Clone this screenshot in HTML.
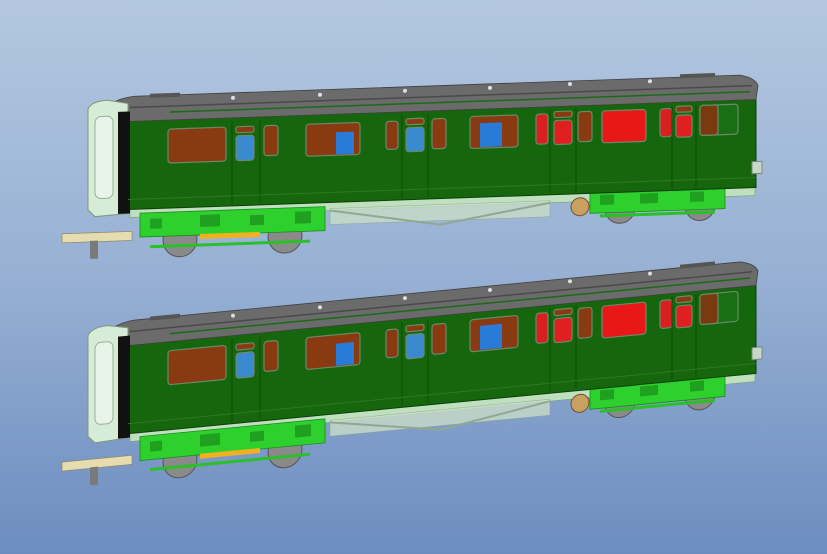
<!DOCTYPE html>
<html><head><meta charset="utf-8"><style>
html,body{margin:0;padding:0;width:827px;height:554px;overflow:hidden}
body{background:linear-gradient(#b3c7e0 0%,#97b0d3 50%,#6c8dc0 100%)}
svg{display:block}
</style></head><body>
<svg width="827" height="554" viewBox="0 0 827 554" xmlns="http://www.w3.org/2000/svg">
<defs>
<g id="car">
  <rect x="62" y="232" width="70" height="9" fill="#e6dcb0" stroke="#8a8060" stroke-width="0.6"/>
  <rect x="90" y="240" width="8" height="18" fill="#7a7a7a"/>
  <rect x="130" y="208" width="625" height="10" fill="#bfe0bf" stroke="#7a9a7a" stroke-width="0.6"/>
  <rect x="330" y="216" width="220" height="16" fill="#c8dcc8" opacity="0.8" stroke="#8aa08a" stroke-width="0.5"/>
  <path d="M330 218 L440 236 L550 218" stroke="#90a890" stroke-width="2" fill="none"/>
  <circle cx="180" cy="242" r="17" fill="#8a8a8a" stroke="#555" stroke-width="1"/>
  <circle cx="285" cy="242" r="17" fill="#8a8a8a" stroke="#555" stroke-width="1"/>
  <rect x="140" y="214" width="185" height="24" fill="#2ed02e" stroke="#1a8a1a" stroke-width="0.8"/>
  <g fill="#1fa01f"><rect x="150" y="220" width="12" height="10"/><rect x="200" y="218" width="20" height="12"/><rect x="250" y="220" width="14" height="10"/><rect x="295" y="218" width="16" height="12"/></g>
  <rect x="200" y="237" width="60" height="5" fill="#f0b020"/>
  <line x1="150" y1="248" x2="310" y2="248" stroke="#2ac02a" stroke-width="3"/>
  <circle cx="620" cy="226" r="15" fill="#8a8a8a" stroke="#555" stroke-width="1"/>
  <circle cx="700" cy="226" r="15" fill="#8a8a8a" stroke="#555" stroke-width="1"/>
  <rect x="590" y="208" width="135" height="22" fill="#2ed02e" stroke="#1a8a1a" stroke-width="0.8"/>
  <g fill="#1fa01f"><rect x="600" y="212" width="14" height="10"/><rect x="640" y="212" width="18" height="10"/><rect x="690" y="212" width="14" height="10"/></g>
  <circle cx="580" cy="223" r="9" fill="#c8a060" stroke="#705030"/>
  <line x1="600" y1="233" x2="715" y2="233" stroke="#2ac02a" stroke-width="3"/>
  <rect x="128" y="120" width="628" height="90" fill="#16660e" stroke="#0c3f08" stroke-width="1"/>
  <path d="M108 106 Q118 98 135 97 L740 97 Q755 100 758 108 L756 122 L128 122 Z" fill="#6b6b6b" stroke="#3f3f3f" stroke-width="0.8"/>
  <line x1="130" y1="108" x2="752" y2="108" stroke="#4a4a4a" stroke-width="1.5"/>
  <line x1="170" y1="114" x2="750" y2="114" stroke="#1c6a14" stroke-width="1.5"/>
  <rect x="150" y="95" width="30" height="4" fill="#555"/>
  <rect x="680" y="94" width="35" height="4" fill="#555"/>
  <path d="M88 108 Q92 100 108 100 L128 104 L128 214 L95 216 L88 209 Z" fill="#d6ecd6" stroke="#7c987c" stroke-width="1"/>
  <rect x="95" y="116" width="18" height="82" rx="6" fill="#e8f4e8" stroke="#9ab09a"/>
  <rect x="118" y="112" width="12" height="102" fill="#111"/>
  <g stroke="#6a8a6a" stroke-width="1.2">
    <rect x="168" y="131" width="58" height="34" rx="3" fill="#8a3a10"/>
    <rect x="236" y="140" width="18" height="25" rx="3" fill="#3a8ad0"/>
    <rect x="236" y="131" width="18" height="6" rx="2" fill="#8a3a10"/>
    <rect x="264" y="131" width="14" height="30" rx="3" fill="#8a3a10"/>
    <rect x="306" y="131" width="54" height="32" rx="3" fill="#8a3a10"/>
    <rect x="336" y="140" width="18" height="22" fill="#2a7ad8" stroke="none"/>
    <rect x="386" y="131" width="12" height="28" rx="3" fill="#8a3a10"/>
    <rect x="406" y="138" width="18" height="24" rx="3" fill="#3a8ad0"/>
    <rect x="406" y="129" width="18" height="6" rx="2" fill="#8a3a10"/>
    <rect x="432" y="130" width="14" height="30" rx="3" fill="#8a3a10"/>
    <rect x="470" y="129" width="48" height="32" rx="3" fill="#8a3a10"/>
    <rect x="480" y="136" width="22" height="24" fill="#2a7ad8" stroke="none"/>
    <rect x="536" y="129" width="12" height="30" rx="3" fill="#d82020"/>
    <rect x="554" y="136" width="18" height="24" rx="3" fill="#e02020"/>
    <rect x="554" y="127" width="18" height="6" rx="2" fill="#8a3a10"/>
    <rect x="578" y="128" width="14" height="30" rx="3" fill="#8a3a10"/>
    <rect x="602" y="128" width="44" height="32" rx="3" fill="#e81818"/>
    <rect x="660" y="128" width="12" height="28" rx="3" fill="#d82020"/>
    <rect x="676" y="135" width="16" height="22" rx="3" fill="#e02020"/>
    <rect x="676" y="126" width="16" height="6" rx="2" fill="#8a3a10"/>
    <rect x="700" y="126" width="38" height="30" rx="3" fill="#1a6e14"/>
    <rect x="700" y="126" width="18" height="30" rx="3" fill="#7a3a10"/>
  </g>
  <g stroke="#0c4a08" stroke-width="1">
    <line x1="232" y1="125" x2="232" y2="208"/><line x1="260" y1="125" x2="260" y2="208"/>
    <line x1="402" y1="125" x2="402" y2="208"/><line x1="428" y1="125" x2="428" y2="208"/>
    <line x1="550" y1="125" x2="550" y2="208"/><line x1="576" y1="125" x2="576" y2="208"/>
    <line x1="672" y1="125" x2="672" y2="208"/><line x1="696" y1="125" x2="696" y2="208"/>
    <line x1="128" y1="200" x2="756" y2="200" stroke="#2a7a22"/>
  </g>
  <g fill="#dde">
    <circle cx="233" cy="102" r="2"/><circle cx="320" cy="102" r="2"/><circle cx="405" cy="101" r="2"/>
    <circle cx="490" cy="101" r="2"/><circle cx="570" cy="100" r="2"/><circle cx="650" cy="100" r="2"/>
  </g>
  <rect x="752" y="184" width="10" height="12" fill="#c8d8c8" stroke="#7a8a7a"/>
</g>
</defs>
<use href="#car" transform="matrix(1,-0.035,0,1,0,4)"/>
<use href="#car" transform="matrix(1,-0.096,0,1,0,236)"/>
</svg>
</body></html>
